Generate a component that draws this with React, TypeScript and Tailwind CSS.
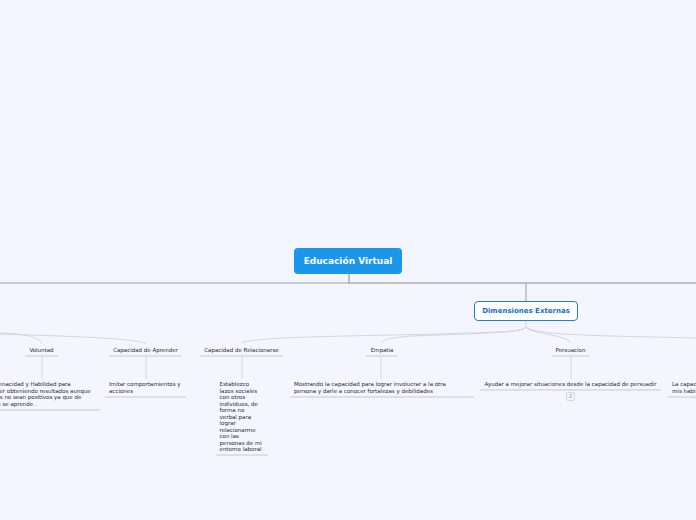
import React from 'react';

const font = { fontFamily: '"DejaVu Sans", sans-serif' };

const rule = 'border-b-2 border-[#dcdfe8]';

type BranchProps = {
  label: string;
  labelWidth: string;
  noteWidth: string;
  noteHeight: string;
  className?: string;
  noteClass?: string;
  lines: string[];
  children?: React.ReactNode;
};

// label on top, its note under it, both centered on the connector
const Branch: React.FC<BranchProps> = ({ label, labelWidth, noteWidth, noteHeight, className, noteClass, lines, children }) => (
  <div className={`flex flex-col items-center shrink-0 gap-[24px] ${className ?? ''}`}>
    <div className={`h-[10px] text-center whitespace-nowrap ${rule} ${labelWidth}`}>{label}</div>
    <div className="flex flex-col items-center gap-[1px]">
      <div className={`whitespace-nowrap ${rule} ${noteWidth} ${noteHeight} ${noteClass ?? 'pl-[4px]'}`}>
        {lines.map((l) => (
          <div key={l}>{l}</div>
        ))}
      </div>
      {children}
    </div>
  </div>
);

const Connectors: React.FC = () => (
  <svg className="absolute inset-0" width="696" height="520" fill="none">
    <path d="M0 283H349" stroke="#c9ccd6" strokeWidth="2" />
    <path d="M349 274V283H696" stroke="#a9adb6" strokeWidth="1.5" />
    <path d="M526 283V301" stroke="#b4b8c0" strokeWidth="1.5" />
    <g stroke="#d3d6de" strokeWidth="1">
      <path d="M526 321V327C524 332 500 332 440 334C350 336 250 337 242 343" />
      <path d="M526 327C522 333 480 333 440 335C400 336 385 338 381 343" />
      <path d="M526 327C530 334 565 334 571 343" />
      <path d="M526 327C535 336 620 336 696 338" />
      <path d="M0 333C30 334 40 338 42 344" />
      <path d="M0 334C60 336 140 338 146 344" />
      <path d="M42 357V379" />
      <path d="M146 357V379" />
      <path d="M242 357V379" />
      <path d="M381 357V379" />
      <path d="M571 357V379" />
    </g>
  </svg>
);

export default function App() {
  return (
    <div className="relative w-[696px] h-[520px] overflow-hidden bg-[#f3f6fe]" style={font}>
      <Connectors />

      <div className="absolute left-[294px] top-[248px] w-[108px] h-[26px] pt-[1px] flex items-center justify-center rounded bg-[#1a97ea] text-white text-[9px] font-bold">
        Educación Virtual
      </div>
      <div className="absolute left-[474px] top-[301px] w-[104px] h-[20px] flex items-center justify-center rounded bg-white border border-[#1a7fe0] text-[#0f6fd0] text-[7px] font-bold">
        Dimensiones Externas
      </div>

      <div className="absolute top-[347px] left-[-17px] flex items-start text-[#2a2a32] text-[5.5px] leading-[6.5px]">
        <Branch
          label="Voluntad"
          labelWidth="w-[33px]"
          noteWidth="w-[117px]"
          noteHeight="h-[30px]"
          noteClass="pl-[5px]"
          lines={['La Tenacidad y Habilidad para', 'seguir obteniendo resultados aunque', 'estos no sean positivos ya que de', 'ellos se aprende .']}
        />
        <Branch
          className="ml-[5px]"
          label="Capacidad de Aprender"
          labelWidth="w-[73px]"
          noteWidth="w-[81px]"
          noteHeight="h-[17px]"
          lines={['Imitar comportamientos y', 'acciones']}
        />
        <Branch
          className="ml-[14px]"
          label="Capacidad de Relacionarse"
          labelWidth="w-[83px]"
          noteWidth="w-[52px]"
          noteHeight="h-[75px]"
          lines={['Establezco', 'lazos sociales', 'con otros', 'individuos, de', 'forma no', 'verbal para', 'lograr', 'relacionarme', 'con las', 'personas de mi', 'entorno laboral']}
        />
        <Branch
          className="ml-[7px]"
          label="Empatia"
          labelWidth="w-[32px]"
          noteWidth="w-[184px]"
          noteHeight="h-[17px]"
          lines={['Mostrando la capacidad para lograr involucrar a la otra', 'persona y darle a conocer fortalezas y debilidades']}
        />
        <Branch
          className="ml-[6px]"
          label="Persuacion"
          labelWidth="w-[38px]"
          noteWidth="w-[181px]"
          noteHeight="h-[10px]"
          noteClass="text-center"
          lines={['Ayudar a mejorar situaciones desde la capacidad de persuadir']}
        >
          <div className="w-[9px] h-[9px] flex items-center justify-center rounded-[2px] border border-[#d3d6de] text-[#8b8f99] text-[5px]">
            2
          </div>
        </Branch>
        <div className={`ml-[7px] mt-[34px] w-[60px] h-[17px] pl-[4px] shrink-0 whitespace-nowrap ${rule}`}>
          <div>La capacidad de</div>
          <div>mis habilidades</div>
        </div>
      </div>
    </div>
  );
}
